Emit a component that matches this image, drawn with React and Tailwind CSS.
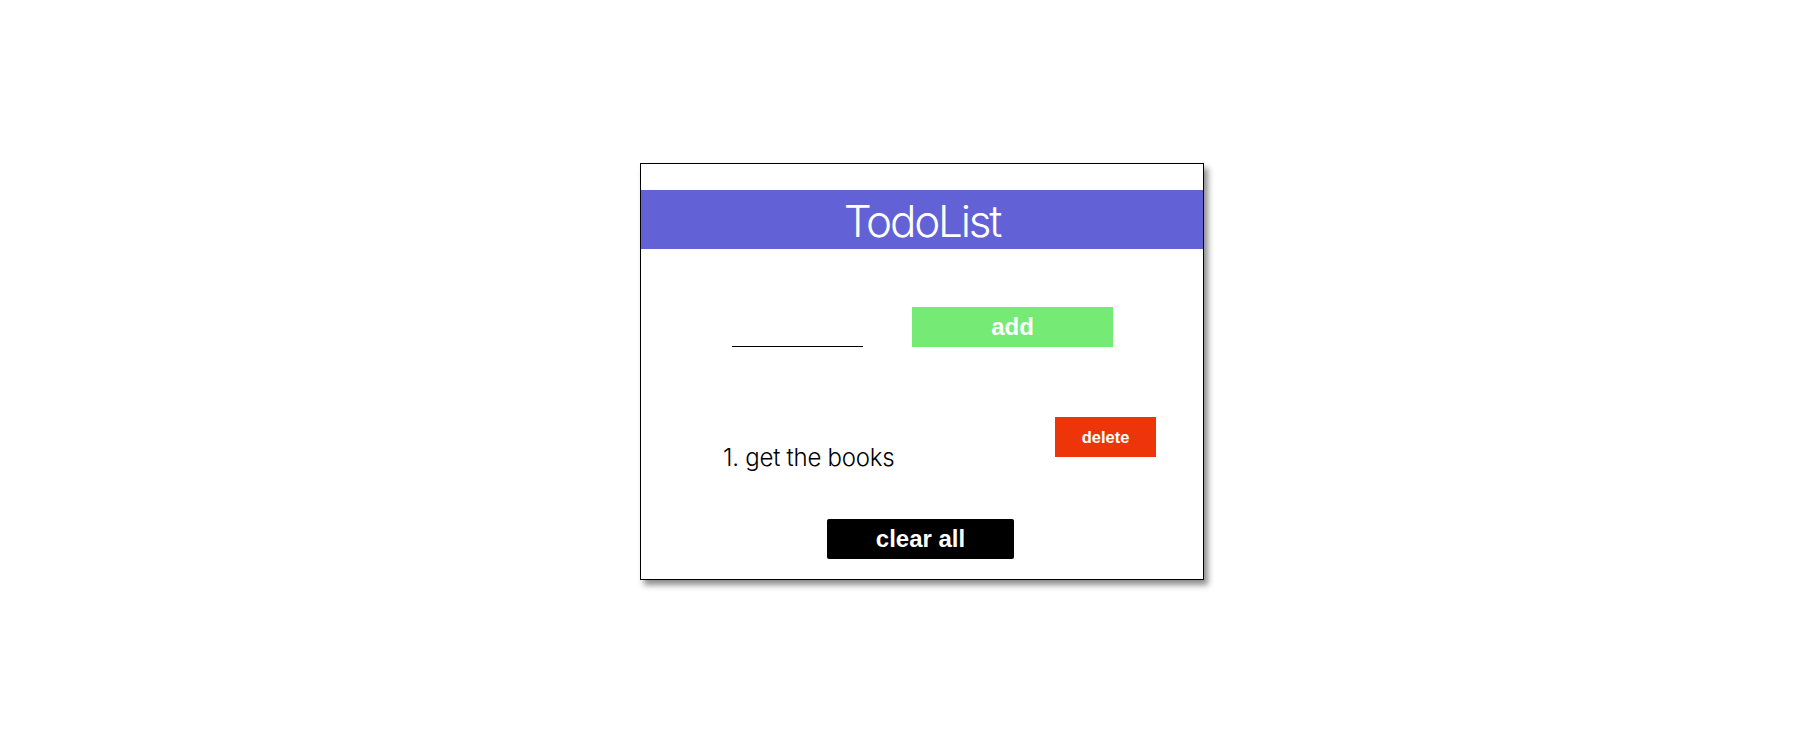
import React, { useState } from "react";

export default function App() {
  const [task, setTask] = useState("");
  const [todos, setTodos] = useState(["get the books"]);

  const addTodo = () => {
    if (!task.trim()) return;
    setTodos([...todos, task.trim()]);
    setTask("");
  };

  return (
    <div className="min-h-[732px] w-full bg-white pt-[163px]">
      {/* card */}
      <div className="ml-[640px] w-[564px] h-[417px] border border-black bg-white shadow-[4px_5px_6px_rgba(0,0,0,0.45)] pt-[26px] flex flex-col">
        <div className="h-[59px] bg-[#6262d6] flex items-center justify-center">
          <h1 className="text-white text-[44px] font-light tracking-[-0.05em] leading-none font-['Inter',sans-serif] pt-[2px]">
            TodoList
          </h1>
        </div>

        {/* input row */}
        <div className="mt-[58px] flex items-end pl-[91px]">
          <input
            value={task}
            onChange={(e) => setTask(e.target.value)}
            className="w-[131px] h-[30px] border-b-[1.5px] border-black outline-none bg-transparent text-[16px] font-['Inter',sans-serif]"
          />
          <button
            onClick={addTodo}
            className="ml-[49px] w-[201px] h-[40px] bg-[#75ea75] text-white text-[24px] font-bold font-['Liberation_Sans',Arial,sans-serif]"
          >
            add
          </button>
        </div>

        {/* list */}
        <ul className="mt-[70px] flex flex-col">
          {todos.map((t, i) => (
            <li key={i} className="flex items-start pl-[82px]">
              <span className="w-[332px] mt-[25px] text-[24px] font-light leading-[32px] text-black font-['Inter',sans-serif] tracking-[-0.01em]">
                {i + 1}. {t}
              </span>
              <button
                onClick={() => setTodos(todos.filter((_, j) => j !== i))}
                className="w-[101px] h-[40px] bg-[#ee3409] text-white text-[16.5px] font-bold font-['Liberation_Sans',Arial,sans-serif]"
              >
                delete
              </button>
            </li>
          ))}
        </ul>

        <div className="mt-auto mb-[20px] flex pl-[186px]">
          <button
            onClick={() => setTodos([])}
            className="w-[187px] h-[40px] bg-black rounded-[2px] text-white text-[24px] font-bold font-['Liberation_Sans',Arial,sans-serif]"
          >
            clear all
          </button>
        </div>
      </div>
    </div>
  );
}
